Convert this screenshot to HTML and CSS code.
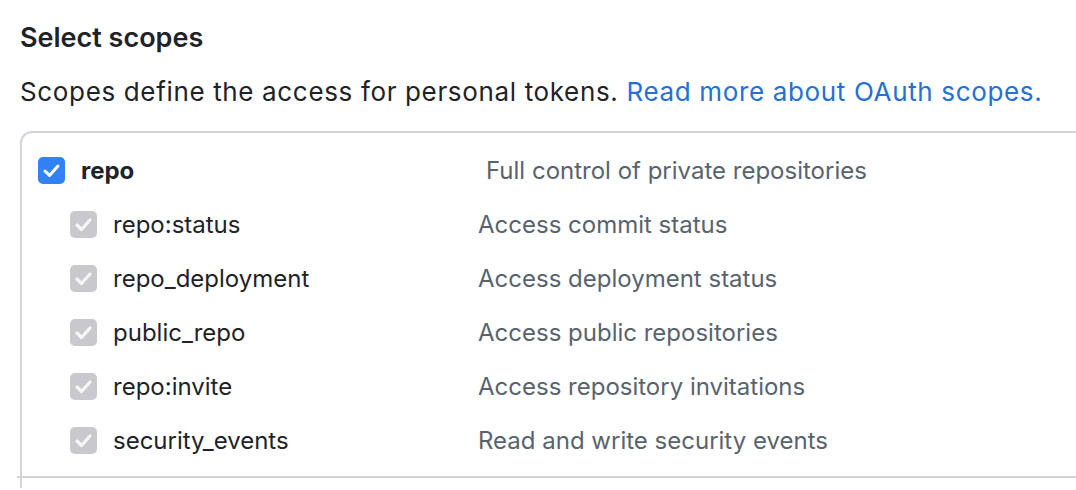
FILE: index.html
```html
<!DOCTYPE html>
<html>
<head>
<meta charset="utf-8">
<link rel="stylesheet" href="styles.css">
</head>
<body>
<div class="page">
  <h2 class="title">Select scopes</h2>
  <p class="lead">Scopes define the access for personal tokens. <a class="link" href="#">Read more about OAuth scopes.</a></p>
  <div class="box">
    <div class="row main">
      <div class="label">
        <span class="cb cb-on"><svg viewBox="0 0 27 27" width="27" height="27"><path d="M7 14 L11.5 18.5 L20 9" fill="none" stroke="#fff" stroke-width="3" stroke-linecap="round" stroke-linejoin="round"/></svg></span>
        <span class="name strong">repo</span>
      </div>
      <div class="desc first">Full control of private repositories</div>
    </div>
    <div class="row sub">
      <div class="label">
        <span class="cb cb-dis"><svg viewBox="0 0 27 27" width="27" height="27"><path d="M7 14 L11.5 18.5 L20 9" fill="none" stroke="#f6f6f8" stroke-width="3.2" stroke-linecap="round" stroke-linejoin="round"/></svg></span>
        <span class="name">repo:status</span>
      </div>
      <div class="desc">Access commit status</div>
    </div>
    <div class="row sub">
      <div class="label">
        <span class="cb cb-dis"><svg viewBox="0 0 27 27" width="27" height="27"><path d="M7 14 L11.5 18.5 L20 9" fill="none" stroke="#f6f6f8" stroke-width="3.2" stroke-linecap="round" stroke-linejoin="round"/></svg></span>
        <span class="name">repo_deployment</span>
      </div>
      <div class="desc">Access deployment status</div>
    </div>
    <div class="row sub">
      <div class="label">
        <span class="cb cb-dis"><svg viewBox="0 0 27 27" width="27" height="27"><path d="M7 14 L11.5 18.5 L20 9" fill="none" stroke="#f6f6f8" stroke-width="3.2" stroke-linecap="round" stroke-linejoin="round"/></svg></span>
        <span class="name">public_repo</span>
      </div>
      <div class="desc">Access public repositories</div>
    </div>
    <div class="row sub">
      <div class="label">
        <span class="cb cb-dis"><svg viewBox="0 0 27 27" width="27" height="27"><path d="M7 14 L11.5 18.5 L20 9" fill="none" stroke="#f6f6f8" stroke-width="3.2" stroke-linecap="round" stroke-linejoin="round"/></svg></span>
        <span class="name">repo:invite</span>
      </div>
      <div class="desc">Access repository invitations</div>
    </div>
    <div class="row sub">
      <div class="label">
        <span class="cb cb-dis"><svg viewBox="0 0 27 27" width="27" height="27"><path d="M7 14 L11.5 18.5 L20 9" fill="none" stroke="#f6f6f8" stroke-width="3.2" stroke-linecap="round" stroke-linejoin="round"/></svg></span>
        <span class="name">security_events</span>
      </div>
      <div class="desc">Read and write security events</div>
    </div>
    <div class="sep"></div>
    <div class="more"></div>
  </div>
</div>
</body>
</html>
```

FILE: styles.css
```css
html, body {
  margin: 0;
  padding: 0;
  background: #ffffff;
  overflow: hidden;
  height: 490px;
}
body {
  font-family: Inter, "Liberation Sans", sans-serif;
  color: #1f2328;
}
.page {
  padding: 22px 0 0 20px;
}
.title {
  margin: 0;
  font-size: 27px;
  line-height: 32px;
  font-weight: 600;
  color: #1f2328;
}
.lead {
  margin: 22px 0 0 0;
  font-size: 26px;
  line-height: 32px;
  letter-spacing: 0.65px;
  color: #1f2328;
  white-space: nowrap;
}
.link {
  color: #2470d8;
  text-decoration: none;
}
.box {
  margin-top: 23px;
  border-top: 2px solid #d1d5db;
  border-left: 2px solid #d1d5db;
  border-top-left-radius: 12px;
  padding-top: 10px;
}
.row {
  display: grid;
  grid-template-columns: 456px 1fr;
  align-items: center;
  height: 54px;
}
.label {
  display: flex;
  align-items: center;
  gap: 16px;
}
.main .label {
  padding-left: 16px;
}
.sub .label {
  padding-left: 48px;
}
.cb {
  display: block;
  width: 27px;
  height: 27px;
  border-radius: 5px;
}
.cb svg {
  display: block;
}
.cb-on {
  background: #3182f6;
}
.cb-dis {
  background: #c8c8cd;
}
.name {
  font-size: 24px;
  line-height: 30px;
  padding-top: 2px;
  color: #1f2328;
}
.strong {
  font-weight: 700;
}
.desc {
  font-size: 24px;
  line-height: 30px;
  padding-top: 2px;
  color: #59636e;
}
.desc.first {
  padding-left: 8px;
}
.sep {
  margin-top: 9px;
  margin-left: -5px;
  height: 2px;
  background: #d1d5db;
}
.more {
  height: 10px;
}
```
